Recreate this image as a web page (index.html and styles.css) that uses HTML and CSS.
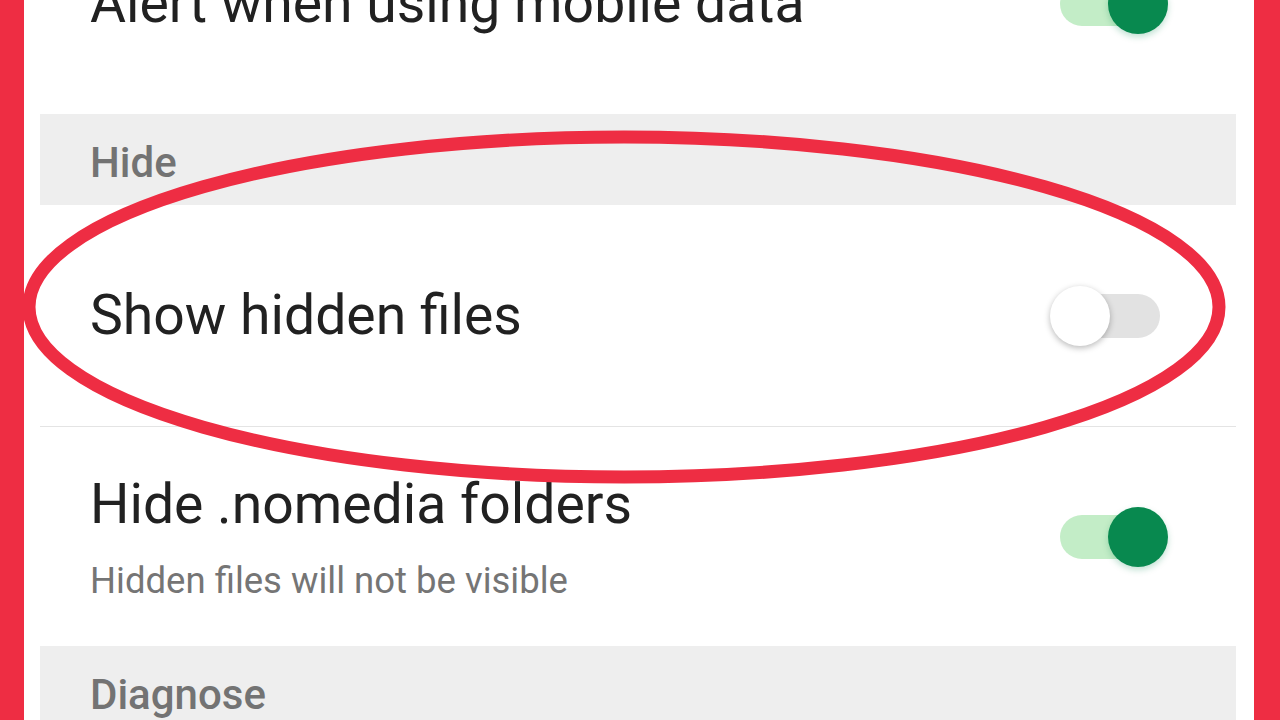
FILE: index.html
```html
<!DOCTYPE html>
<html lang="en">
<head>
<meta charset="utf-8">
<title>Settings</title>
<link rel="stylesheet" href="styles.css">
</head>
<body>
<div class="frame">
  <div class="bar bar-left"></div>
  <main class="screen">
    <div class="list">
      <div class="row row-first">
        <div class="text"><div class="title">Alert when using mobile data</div></div>
        <div class="switch on"><span class="knob"></span></div>
      </div>
      <div class="header">Hide</div>
      <div class="row">
        <div class="text"><div class="title">Show hidden files</div></div>
        <div class="switch off"><span class="knob"></span></div>
      </div>
      <div class="divider"></div>
      <div class="row row-two">
        <div class="text">
          <div class="title">Hide .nomedia folders</div>
          <div class="sub">Hidden files will not be visible</div>
        </div>
        <div class="switch on"><span class="knob"></span></div>
      </div>
      <div class="header">Diagnose</div>
    </div>
    <svg class="circle" width="1230" height="720" viewBox="0 0 1230 720" aria-hidden="true">
      <ellipse cx="600" cy="307" rx="595" ry="170" fill="none" stroke="#ee2d43" stroke-width="13"/>
    </svg>
  </main>
  <div class="bar bar-right"></div>
</div>
</body>
</html>
```
FILE: styles.css
```css
html, body {
  margin: 0;
  padding: 0;
  width: 1280px;
  height: 720px;
  overflow: hidden;
  background: #ffffff;
  font-family: Roboto, "Noto Sans", "Liberation Sans", sans-serif;
}

.frame {
  display: flex;
  width: 1280px;
  height: 720px;
}

.bar {
  background: #ee2d43;
  flex: none;
}
.bar-left { width: 24px; }
.bar-right { width: 26px; }

.screen {
  position: relative;
  flex: 1;
  overflow: hidden;
  background: #ffffff;
}

.list {
  margin: -107px 18px 0 16px;
  display: flex;
  flex-direction: column;
}

.row {
  display: flex;
  align-items: center;
  justify-content: space-between;
  height: 221px;
  padding: 0 76px 0 50px;
  box-sizing: border-box;
  background: #ffffff;
}
.row-two { height: 219px; }

.title {
  font-size: 55.3px;
  line-height: 66px;
  color: #212121;
  white-space: nowrap;
}

.sub {
  margin-top: 21px;
  font-size: 36.5px;
  line-height: 43px;
  color: #757575;
  white-space: nowrap;
}

.header {
  background: #eeeeee;
  color: #737373;
  font-size: 42px;
  font-weight: 500;
  line-height: 48px;
  padding: 25px 50px 18px;
}

.divider {
  height: 1px;
  background: #e4e4e4;
}

.switch {
  position: relative;
  flex: none;
  width: 100px;
  height: 44px;
  border-radius: 22px;
}
.switch.on { background: #c3edc7; }
.switch.off { background: #e2e2e2; }

.knob {
  position: absolute;
  top: -8px;
  width: 60px;
  height: 60px;
  border-radius: 50%;
}
.switch.on .knob {
  right: -8px;
  background: #08894f;
  box-shadow: 0 3px 6px rgba(8, 137, 79, 0.25);
}
.switch.off .knob {
  left: -10px;
  background: #ffffff;
  box-shadow: 0 2px 6px rgba(0, 0, 0, 0.28);
}

.circle {
  position: absolute;
  left: 0;
  top: 0;
  pointer-events: none;
}
```
